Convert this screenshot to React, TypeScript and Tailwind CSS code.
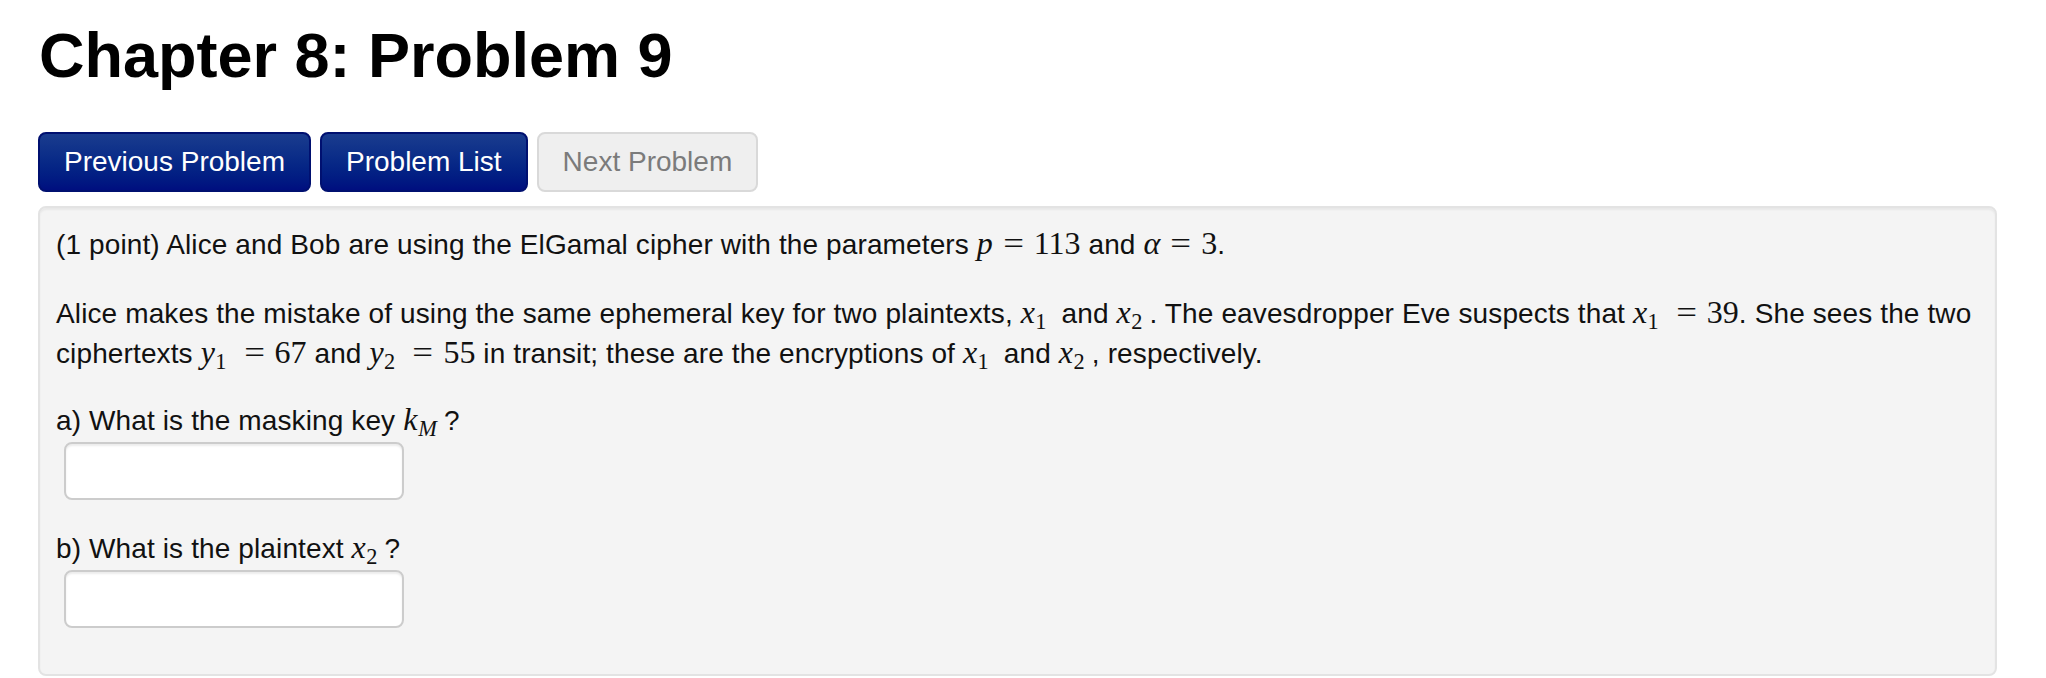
import React from 'react';

// serif math pieces, roughly what MathJax draws
function M({ children }: { children: React.ReactNode }) {
  return (
    <span className="font-['Liberation_Serif',serif] text-[32px] leading-none tracking-normal">
      {children}
    </span>
  );
}

// MathJax's equals sign is wider than the Times one
function Eq() {
  return <span className="mx-[0.28em] inline-block w-[0.72em] scale-x-[1.15] text-center">=</span>;
}

function Var({ v, sub, subItalic }: { v: string; sub?: string; subItalic?: boolean }) {
  return (
    <span className="whitespace-nowrap">
      <span className="italic">{v}</span>
      {sub && (
        <sub
          className={
            subItalic ? 'ml-[0.04em] pr-[0.32em] italic text-[70%]' : 'ml-[0.02em] pr-[0.32em] not-italic text-[70%]'
          }
        >
          {sub}
        </sub>
      )}
    </span>
  );
}

function NavButton({ label, disabled }: { label: string; disabled?: boolean }) {
  if (disabled) {
    return (
      <button
        disabled
        className="h-[60px] rounded-[8px] border-2 border-[#d9d9d9] bg-[#efefef] px-[24px] text-[28px] leading-[40px] text-[#7b7b7b]"
      >
        {label}
      </button>
    );
  }
  return (
    <button className="h-[60px] rounded-[8px] border-2 border-[#001070] bg-linear-to-b from-[#1a3c8e] to-[#000e7f] px-[24px] text-[28px] leading-[40px] text-white">
      {label}
    </button>
  );
}

function AnswerBox() {
  return (
    <input
      type="text"
      className="ml-[8px] mt-px block h-[58px] w-[340px] rounded-[8px] border-2 border-[#cccccc] bg-white shadow-[inset_0_2px_2px_rgba(0,0,0,0.08)] outline-none"
    />
  );
}

export default function App() {
  return (
    <div className="min-h-[678px] bg-white pl-[38px] pr-[49px] pt-[15px] font-['Liberation_Sans',Arial,sans-serif] text-[#111]">
      <h1 className="pl-px text-[63px] font-bold leading-[80px] text-black">Chapter 8: Problem 9</h1>

      <div className="mt-[37px] flex gap-[9px]">
        <NavButton label="Previous Problem" />
        <NavButton label="Problem List" />
        <NavButton label="Next Problem" disabled />
      </div>

      <div className="mt-[14px] rounded-[8px] border-2 border-[#e3e3e3] bg-[#f4f4f4] px-[16px] pb-[46px] pt-[17px] text-[28px] leading-[40px] tracking-[0.12px] shadow-[inset_0_2px_2px_rgba(0,0,0,0.05)]">
        <p className="mb-[29px]">
          (1 point) Alice and Bob are using the ElGamal cipher with the parameters{' '}
          <M>
            <Var v="p" />
            <Eq />
            113
          </M>{' '}
          and{' '}
          <M>
            <Var v="α" />
            <Eq />3
          </M>
          .
        </p>
        <p className="mb-[27px]">
          Alice makes the mistake of using the same ephemeral key for two plaintexts,{' '}
          <M>
            <Var v="x" sub="1" />
          </M>{' '}
          and{' '}
          <M>
            <Var v="x" sub="2" />
          </M>
          . The eavesdropper Eve suspects that{' '}
          <M>
            <Var v="x" sub="1" />
            <Eq />
            39
          </M>
          . She sees the two ciphertexts{' '}
          <M>
            <Var v="y" sub="1" />
            <Eq />
            67
          </M>{' '}
          and{' '}
          <M>
            <Var v="y" sub="2" />
            <Eq />
            55
          </M>{' '}
          in transit; these are the encryptions of{' '}
          <M>
            <Var v="x" sub="1" />
          </M>{' '}
          and{' '}
          <M>
            <Var v="x" sub="2" />
          </M>
          , respectively.
        </p>

        <p>
          a) What is the masking key{' '}
          <M>
            <Var v="k" sub="M" subItalic />
          </M>
          ?
        </p>
        <AnswerBox />

        <p className="mt-[29px]">
          b) What is the plaintext{' '}
          <M>
            <Var v="x" sub="2" />
          </M>
          ?
        </p>
        <AnswerBox />
      </div>
    </div>
  );
}
